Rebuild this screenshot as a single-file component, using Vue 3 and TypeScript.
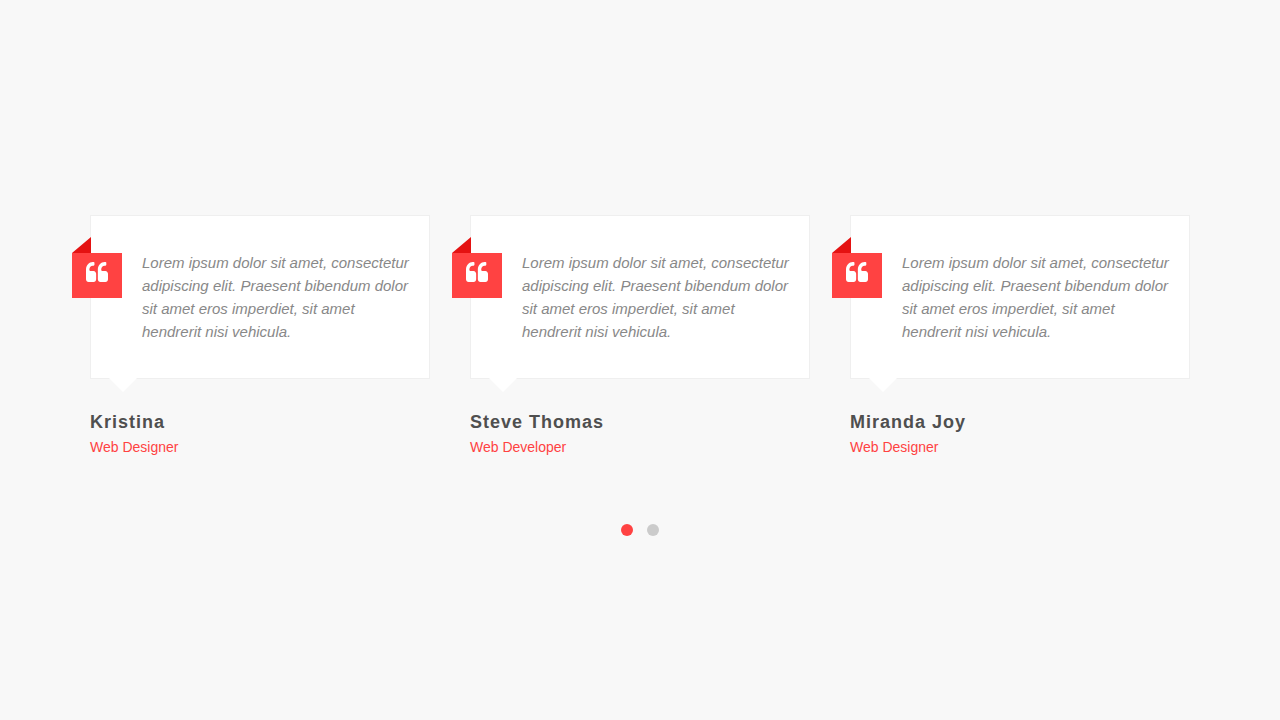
<script setup lang="ts">
import { ref } from 'vue'

interface Testimonial {
  name: string
  role: string
  text: string
}

const text =
  'Lorem ipsum dolor sit amet, consectetur adipiscing elit. Praesent bibendum dolor sit amet eros imperdiet, sit amet hendrerit nisi vehicula.'

const testimonials: Testimonial[] = [
  { name: 'Kristina', role: 'Web Designer', text },
  { name: 'Steve Thomas', role: 'Web Developer', text },
  { name: 'Miranda Joy', role: 'Web Designer', text },
]

const quoteMark =
  'M832 960v384q0 80-56 136t-136 56H256q-80 0-136-56t-56-136V640q0-104 40.5-198.5T214 278t163.5-109.5T576 128h64q26 0 45 19t19 45v128q0 26-19 45t-45 19h-64q-106 0-181 75t-75 181v32q0 40 28 68t68 28h224q80 0 136 56t56 136z'

const pages = [1, 2]
const current = ref(1)
</script>

<template>
  <main class="page">
    <section class="slider">
      <div class="slides">
        <article v-for="item in testimonials" :key="item.name" class="testimonial">
          <blockquote class="bubble">
            <span class="badge">
              <svg class="quote" viewBox="64 128 1664 1408" preserveAspectRatio="none" aria-hidden="true">
                <path :d="quoteMark" />
                <path :d="quoteMark" transform="translate(896 0)" />
              </svg>
            </span>
            <p class="text">{{ item.text }}</p>
          </blockquote>
          <h3 class="name">{{ item.name }}</h3>
          <span class="role">{{ item.role }}</span>
        </article>
      </div>
      <nav class="dots" aria-label="Testimonial pages">
        <button
          v-for="page in pages"
          :key="page"
          type="button"
          class="dot"
          :class="{ active: page === current }"
          :aria-label="`Page ${page}`"
          @click="current = page"
        ></button>
      </nav>
    </section>
  </main>
</template>

<style>
body {
  background: #f8f8f8;
}
</style>

<style scoped>
.page {
  box-sizing: border-box;
  min-height: 100vh;
  padding: 215px 70px 40px;
  font-family: 'Liberation Sans', Arial, sans-serif;
}

.slider {
  max-width: 1140px;
  margin: 0 auto;
}

.slides {
  display: grid;
  grid-template-columns: repeat(3, 1fr);
  gap: 40px;
  padding: 0 20px;
}

.bubble {
  position: relative;
  margin: 0 0 30px;
  padding: 35px 15px 35px 51px;
  background: #fff;
  border: 1px solid #efefef;
}

.bubble::after {
  content: '';
  position: absolute;
  top: 100%;
  left: 18px;
  border: 14px solid transparent;
  border-top-color: #fff;
  border-bottom: 0;
}

.badge {
  position: absolute;
  top: 37px;
  left: -19px;
  display: flex;
  justify-content: center;
  width: 50px;
  height: 45px;
  background: #ff4242;
}

.badge::before {
  content: '';
  position: absolute;
  bottom: 100%;
  left: 0;
  border-bottom: 16px solid #e41212;
  border-left: 19px solid transparent;
}

.quote {
  width: 22px;
  height: 20px;
  margin-top: 9px;
  fill: #fff;
}

.text {
  margin: 0;
  color: #888;
  font-size: 15px;
  font-style: italic;
  line-height: 23px;
}

.name {
  margin: 0 0 2px;
  color: #4f4f4f;
  font-size: 18px;
  line-height: 27px;
  letter-spacing: 1px;
}

.role {
  display: block;
  color: #ff4242;
  font-size: 14px;
  line-height: 18px;
}

.dots {
  display: flex;
  justify-content: center;
  gap: 14px;
  margin-top: 68px;
}

.dot {
  width: 12px;
  height: 12px;
  padding: 0;
  background: #cbcbcb;
  border: 0;
  border-radius: 50%;
  cursor: pointer;
}

.dot.active {
  background: #ff4242;
}
</style>
